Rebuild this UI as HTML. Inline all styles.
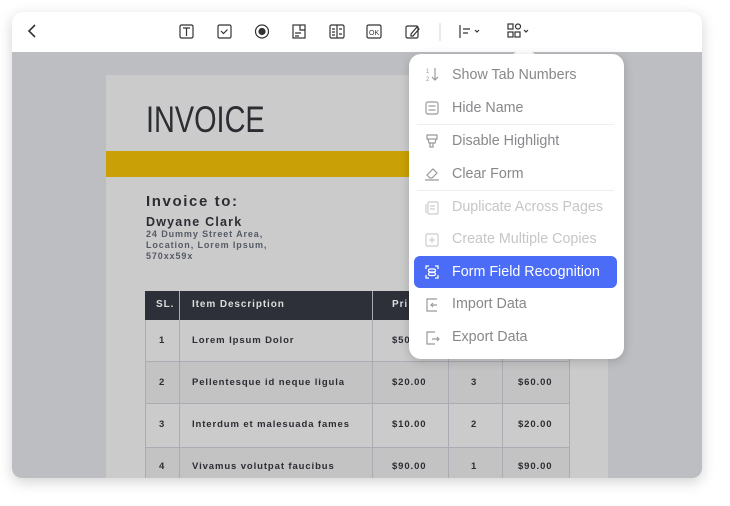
<!DOCTYPE html>
<html><head><style>
*{margin:0;padding:0;box-sizing:border-box}
body{width:730px;height:506px;background:#fff;position:relative;overflow:hidden;font-family:"Liberation Sans",sans-serif}
.win{position:absolute;left:12px;top:12px;width:690px;height:466px;border-radius:10px;overflow:hidden;background:#bdbec2;box-shadow:0 4px 14px rgba(0,0,0,.18)}
.tb{position:absolute;left:0;top:0;width:690px;height:40px;background:#fff}
.page{position:absolute;left:94px;top:63px;width:502px;height:420px;background:#cbcbcb}
.abs{position:absolute}
.t{position:absolute;color:#2b2d33;font-weight:bold;letter-spacing:.9px}
.menu{position:absolute;left:409px;top:54px;width:215px;height:305px;background:#fff;border-radius:12px;box-shadow:0 2px 10px rgba(0,0,0,.18)}
.mi{position:absolute;left:43px;font-size:14.3px;color:#88888b}
.dis{color:#c6c6c8}
.ic{position:absolute;left:15px}
</style></head><body>
<div class="win">
<div class="tb">
<svg class="abs" style="left:14px;top:10px" width="14" height="18"><path d="M9 3 L3 9 L9 15" fill="none" stroke="#333" stroke-width="1.6"/></svg>
<svg class="abs" style="left:166px;top:11px" width="420" height="18" fill="none" stroke="#333" stroke-width="1.2">
<rect x="2" y="2" width="13" height="13" rx="1.5"/><path d="M5 5h7M8.5 5v8"/>
<rect x="40" y="2" width="13" height="13" rx="1.5"/><path d="M43 8l2.5 2.5 4-4"/>
<circle cx="84" cy="8.5" r="6.5"/><circle cx="84" cy="8.5" r="3" fill="#333"/>
<rect x="115" y="2" width="12" height="13"/><path d="M117 10h6M117 13h4M122 2v5h5"/>
<rect x="152" y="2" width="14" height="13" rx="1.5"/><path d="M159 2v13M154 6h3M154 9h3M154 12h3M161 6h3M161 11h3"/>
<rect x="189" y="2" width="14" height="13" rx="1.5"/><text x="191" y="12" font-size="7" fill="#333" stroke="none" font-family="Liberation Sans">OK</text>
<rect x="228" y="3" width="12" height="12" rx="1.5"/><path d="M233 11l6-7 2 2-6 7h-2z"/>
<path d="M262 -1v20" stroke="#ddd"/>
<path d="M282 2v13M285 6h7M285 10h5M297 7l2 2 2-2"/>
<rect x="330" y="1" width="5" height="5"/><circle cx="340" cy="3.5" r="2.5"/><rect x="330" y="9" width="5" height="5"/><rect x="337" y="9" width="5" height="5"/><path d="M346 7l2 2 2-2"/>
</svg>
<svg class="abs" style="left:500px;top:33px" width="24" height="10"><path d="M0 10 L12 0 L24 10Z" fill="#fff"/></svg>
</div>
<div class="page">
<div class="abs" style="left:40px;top:24px;font-size:37px;color:#2b2d33;transform:scaleX(.78);transform-origin:left top;font-family:'Liberation Sans Narrow','Liberation Sans',sans-serif">INVOICE</div>
<div class="abs" style="left:0;top:76px;width:502px;height:26px;background:#c9a106"></div>
<div class="t" style="left:40px;top:118px;font-size:15px;letter-spacing:1.6px">Invoice to:</div>
<div class="t" style="left:40px;top:140px;font-size:12.5px;letter-spacing:1.2px">Dwyane Clark</div>
<div class="t" style="left:40px;top:154px;font-size:9px;line-height:11px;color:#555a66">24 Dummy Street Area,<br>Location, Lorem Ipsum,<br>570xx59x</div>
<div class="abs" style="left:39px;top:216px;width:425px;height:210px;border:1px solid #a9acb3;border-top:none"></div>
<div class="abs" style="left:39px;top:216px;width:425px;height:29px;background:#2d3038"></div>
<div class="abs" style="left:39px;top:286px;width:425px;height:1px;background:#a9acb3"></div>
<div class="abs" style="left:39px;top:328px;width:425px;height:1px;background:#a9acb3"></div>
<div class="abs" style="left:39px;top:372px;width:425px;height:1px;background:#a9acb3"></div>
<div class="abs" style="left:39px;top:287px;width:425px;height:41px;background:#c3c3c3"></div>
<div class="abs" style="left:39px;top:373px;width:425px;height:50px;background:#c3c3c3"></div>
<div class="abs" style="left:39px;top:245px;width:1px;height:180px;background:#a9acb3"></div>
<div class="abs" style="left:463px;top:245px;width:1px;height:180px;background:#a9acb3"></div>
<div class="abs" style="left:73px;top:216px;width:1px;height:210px;background:#a9acb3"></div>
<div class="abs" style="left:266px;top:216px;width:1px;height:210px;background:#a9acb3"></div>
<div class="abs" style="left:342px;top:245px;width:1px;height:180px;background:#a9acb3"></div>
<div class="abs" style="left:396px;top:245px;width:1px;height:180px;background:#a9acb3"></div>
<div class="t" style="left:50px;top:224px;font-size:10px;color:#ddd">SL.</div>
<div class="t" style="left:86px;top:224px;font-size:10px;color:#ddd">Item Description</div>
<div class="t" style="left:286px;top:224px;font-size:10px;color:#ddd">Pri</div>
<div class="t" style="left:53px;top:260px;font-size:9.5px">1</div><div class="t" style="left:86px;top:260px;font-size:9.5px">Lorem Ipsum Dolor</div><div class="t" style="left:286px;top:260px;font-size:9.5px">$50</div>
<div class="t" style="left:53px;top:302px;font-size:9.5px">2</div><div class="t" style="left:86px;top:302px;font-size:9.5px">Pellentesque id neque ligula</div><div class="t" style="left:286px;top:302px;font-size:9.5px">$20.00</div><div class="t" style="left:365px;top:302px;font-size:9.5px">3</div><div class="t" style="left:412px;top:302px;font-size:9.5px">$60.00</div>
<div class="t" style="left:53px;top:344px;font-size:9.5px">3</div><div class="t" style="left:86px;top:344px;font-size:9.5px">Interdum et malesuada fames</div><div class="t" style="left:286px;top:344px;font-size:9.5px">$10.00</div><div class="t" style="left:365px;top:344px;font-size:9.5px">2</div><div class="t" style="left:412px;top:344px;font-size:9.5px">$20.00</div>
<div class="t" style="left:53px;top:386px;font-size:9.5px">4</div><div class="t" style="left:86px;top:386px;font-size:9.5px">Vivamus volutpat faucibus</div><div class="t" style="left:286px;top:386px;font-size:9.5px">$90.00</div><div class="t" style="left:365px;top:386px;font-size:9.5px">1</div><div class="t" style="left:412px;top:386px;font-size:9.5px">$90.00</div>
</div>
</div>
<div class="menu">
<div class="abs" style="left:8px;top:70px;width:197px;height:1px;background:#eee"></div>
<div class="abs" style="left:8px;top:136px;width:197px;height:1px;background:#eee"></div>
<div class="abs" style="left:5px;top:202px;width:203px;height:32px;background:#4a6cf7;border-radius:6px"></div>
<svg class="ic" style="top:12px" width="16" height="18" fill="none" stroke="#999" stroke-width="1.2"><text x="2" y="7" font-size="6" fill="#999" stroke="none">1</text><text x="2" y="15" font-size="6" fill="#999" stroke="none">2</text><path d="M11 2v12M8 11l3 3 3-3"/></svg>
<div class="mi" style="top:13px">Show Tab Numbers</div>
<svg class="ic" style="top:46px" width="16" height="16" fill="none" stroke="#999" stroke-width="1.2"><rect x="2" y="2" width="12" height="12" rx="2"/><path d="M4.5 6h7M4.5 10h7"/></svg>
<div class="mi" style="top:46px">Hide Name</div>
<svg class="ic" style="top:79px" width="16" height="16" fill="none" stroke="#999" stroke-width="1.2"><path d="M3 2h10v4H3zM4 6l1 4h6l1-4M6 10v4h3v-4"/></svg>
<div class="mi" style="top:79px">Disable Highlight</div>
<svg class="ic" style="top:112px" width="16" height="16" fill="none" stroke="#999" stroke-width="1.2"><path d="M3 9l6-6 4 4-5 5H6zM1 14h14"/></svg>
<div class="mi" style="top:112px">Clear Form</div>
<svg class="ic" style="top:145px" width="16" height="16" fill="none" stroke="#ccc" stroke-width="1.2"><rect x="4" y="3" width="10" height="12" rx="1"/><path d="M2 5v9M6 7h5M6 10h5"/></svg>
<div class="mi dis" style="top:145px">Duplicate Across Pages</div>
<svg class="ic" style="top:178px" width="16" height="16" fill="none" stroke="#ccc" stroke-width="1.2"><rect x="2" y="2" width="12" height="12" rx="1"/><path d="M8 5v6M5 8h6"/></svg>
<div class="mi dis" style="top:177px">Create Multiple Copies</div>
<svg class="ic" style="top:210px" width="16" height="16" fill="none" stroke="#fff" stroke-width="1.3"><path d="M2 5V2h3M11 2h3v3M14 11v3h-3M5 14H2v-3"/><rect x="4.5" y="5" width="7" height="3" rx="1.5"/><rect x="4.5" y="8.5" width="7" height="3" rx="1.5"/></svg>
<div class="mi" style="top:210px;color:#fff">Form Field Recognition</div>
<svg class="ic" style="top:243px" width="16" height="16" fill="none" stroke="#999" stroke-width="1.2"><path d="M13 2H3v12h10M13 8H7M9 6L7 8l2 2"/></svg>
<div class="mi" style="top:242px">Import Data</div>
<svg class="ic" style="top:276px" width="16" height="16" fill="none" stroke="#999" stroke-width="1.2"><path d="M11 2H3v12h8M8 9h7M13 7l2 2-2 2"/></svg>
<div class="mi" style="top:275px">Export Data</div>
</div>
</body></html>
